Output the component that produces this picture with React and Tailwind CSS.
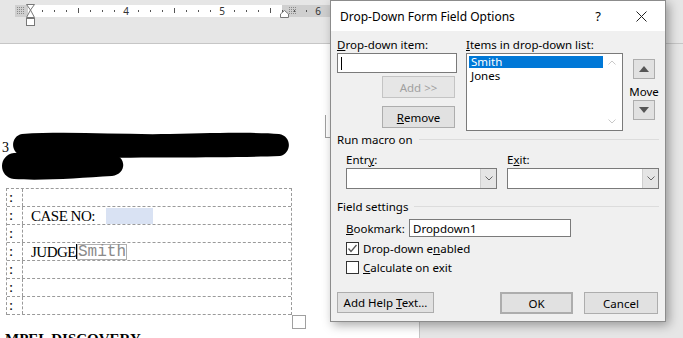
const ui = "font-['Noto_Sans',sans-serif] text-[11.5px] leading-[15px] text-black";

const Ruler = () => {
  const nums = [
    { x: 126, n: "4" },
    { x: 222, n: "5" },
    { x: 318, n: "6" },
  ];
  const marks = [];
  [30, 126, 222].forEach((base) => {
    for (let k = 1; k < 8; k++) {
      const x = base + k * 12;
      if (x < 36) continue;
      marks.push({ x, big: k === 4 });
    }
  });
  return (
    <svg width="340" height="30" className="block">
      <rect x="15" y="5" width="13" height="12" fill="#cfcfcf" />
      <rect x="28" y="5" width="254" height="12" fill="#ffffff" />
      <rect x="282" y="5" width="60" height="12" fill="#cfcfcf" />
      {[17, 289].map((gx) => (
        <g key={gx} fill="#8a8a8a">
          {[0, 2, 4, 6].map((i) =>
            [0, 2, 4, 6].map((j) => (
              <rect key={i + "-" + j} x={gx + i} y={7 + j} width="1" height="1" />
            ))
          )}
        </g>
      ))}
      {marks.map((m) =>
        m.big ? (
          <rect key={m.x} x={m.x} y="8" width="1" height="5" fill="#555" />
        ) : (
          <rect key={m.x} x={m.x} y="10" width="1" height="2" fill="#555" />
        )
      )}
      {nums.map((n) => (
        <text
          key={n.n}
          x={n.x}
          y="14.5"
          textAnchor="middle"
          fontSize="10"
          fontFamily="Noto Sans, sans-serif"
          fill="#333"
        >
          {n.n}
        </text>
      ))}
      <path d="M26.5 4.5 H34.5 L30.5 10 Z" fill="#fff" stroke="#777" />
      <path d="M30.5 10 L34.5 17.5 H26.5 Z" fill="#fff" stroke="#777" />
      <rect x="26.5" y="18.5" width="8" height="7" fill="#fff" stroke="#777" />
      <path d="M280.5 17.5 V14 L284.5 10.5 L288.5 14 V17.5 Z" fill="#fff" stroke="#777" />
    </svg>
  );
};

const Btn = ({ className = "", children }) => (
  <div
    className={
      "flex items-center justify-center bg-[#e1e1e1] border border-[#adadad] " + className
    }
  >
    {children}
  </div>
);

const Combo = ({ w }) => (
  <div className={"flex h-[21px] bg-white border border-[#7a7a7a] " + w}>
    <div className="flex-1" />
    <div className="w-[16px] bg-[#e5e5e5] border-l border-[#cfcfcf] flex items-center justify-center">
      <svg width="8" height="5">
        <path d="M0.5 0.5 L4 4 L7.5 0.5" fill="none" stroke="#666" />
      </svg>
    </div>
  </div>
);

const Check = ({ on }) => (
  <div className="w-[13px] h-[13px] bg-white border border-[#333] flex items-center justify-center">
    {on && (
      <svg width="11" height="11">
        <path d="M1.5 5.5 L4 8.5 L9.5 2" fill="none" stroke="#555" strokeWidth="1.3" />
      </svg>
    )}
  </div>
);

const Row = ({ children }) => (
  <div className="flex h-[18px] border-b border-dashed border-[#9a9a9a]">
    <div className="w-[16px] border-r border-dashed border-[#9a9a9a] pl-[2px] leading-[17px]">:</div>
    <div className="flex-1 flex items-center pl-[8px]">{children}</div>
  </div>
);

const Dialog = () => (
  <div
    className={
      "absolute left-[330px] top-0 w-[336px] h-[322px] bg-[#f0f0f0] border border-[#8c8c8c] shadow-[3px_3px_10px_rgba(0,0,0,0.35)] flex flex-col " +
      ui
    }
  >
    <div className="h-[30px] bg-white flex items-center pl-[9px] shrink-0">
      <span className="flex-1 text-[12px]">Drop-Down Form Field Options</span>
      <span className="text-[13px] mr-[35px]">?</span>
      <svg width="11" height="11" className="mr-[18px]">
        <path d="M0.5 0.5 L10.5 10.5 M10.5 0.5 L0.5 10.5" stroke="#222" strokeWidth="1" />
      </svg>
    </div>

    <div className="flex pl-[6px] h-[100px]">
      <div className="w-[120px] flex flex-col">
        <div className="mt-[6px] h-[15px]">
          <u>D</u>rop-down item:
        </div>
        <div className="mt-[1px] h-[20px] bg-white border border-[#7a7a7a] flex items-center pl-[3px]">
          <div className="w-px h-[13px] bg-black" />
        </div>
        <Btn className="ml-[45px] w-[73px] h-[22px] mt-[3px] text-[#a0a0a0] border-[#c4c4c4] bg-[#e6e6e6]">
          Add &gt;&gt;
        </Btn>
        <Btn className="ml-[45px] w-[73px] h-[22px] mt-[8px]">
          <span>
            <u>R</u>emove
          </span>
        </Btn>
      </div>
      <div className="ml-[9px] w-[157px] flex flex-col">
        <div className="mt-[6px] h-[15px]">
          <u>I</u>tems in drop-down list:
        </div>
        <div className="mt-[1px] h-[78px] bg-white border border-[#7a7a7a] flex p-[2px]">
          <div className="flex-1 flex flex-col">
            <div className="h-[12px] bg-[#0078d7] text-white pl-[2px] leading-[12px]">Smith</div>
            <div className="h-[13px] pl-[2px] leading-[13px] mt-[1px]">Jones</div>
          </div>
          <div className="w-[17px] flex flex-col items-center justify-between py-[4px]">
            <svg width="8" height="5">
              <path d="M0.5 4.5 L4 1 L7.5 4.5" fill="none" stroke="#c8c8c8" />
            </svg>
            <svg width="8" height="5">
              <path d="M0.5 0.5 L4 4 L7.5 0.5" fill="none" stroke="#c8c8c8" />
            </svg>
          </div>
        </div>
      </div>
      <div className="ml-[10px] w-[22px] flex flex-col items-center">
        <Btn className="mt-[28px] w-[22px] h-[20px] shrink-0">
          <svg width="10" height="6">
            <path d="M0 6 L5 0 L10 6 Z" fill="#555" />
          </svg>
        </Btn>
        <div className="mt-[5px] h-[15px] whitespace-nowrap">Move</div>
        <Btn className="mt-[1px] w-[22px] h-[20px] shrink-0">
          <svg width="10" height="6">
            <path d="M0 0 L10 0 L5 6 Z" fill="#555" />
          </svg>
        </Btn>
      </div>
    </div>

    <div className="mt-[1px] flex items-center pl-[6px] pr-[6px] h-[15px]">
      <span>Run macro on</span>
      <div className="flex-1 h-px bg-[#dcdcdc] ml-[6px]" />
    </div>
    <div className="mt-[5px] flex pl-[15px] h-[15px]">
      <div className="w-[161px]">
        Entr<u>y</u>:
      </div>
      <div>
        E<u>x</u>it:
      </div>
    </div>
    <div className="mt-[1px] flex pl-[15px] gap-[10px]">
      <Combo w="w-[151px]" />
      <Combo w="w-[152px]" />
    </div>

    <div className="mt-[10px] flex items-center pl-[6px] pr-[6px] h-[15px]">
      <span>Field settings</span>
      <div className="flex-1 h-px bg-[#dcdcdc] ml-[6px]" />
    </div>
    <div className="mt-[5px] flex items-center pl-[15px] h-[18px]">
      <div className="w-[63px]">
        <u>B</u>ookmark:
      </div>
      <div className="w-[162px] h-[18px] bg-white border border-[#7a7a7a] flex items-center pl-[3px]">
        Dropdown1
      </div>
    </div>
    <div className="mt-[5px] flex items-center pl-[15px] h-[13px] gap-[4px]">
      <Check on />
      <span>
        Drop-down e<u>n</u>abled
      </span>
    </div>
    <div className="mt-[6px] flex items-center pl-[15px] h-[13px] gap-[4px]">
      <Check />
      <span>
        <u>C</u>alculate on exit
      </span>
    </div>
    <div className="mt-[18px] flex pl-[6px]">
      <Btn className="w-[97px] h-[21px]">
        <span>
          Add Help <u>T</u>ext...
        </span>
      </Btn>
      <Btn className="ml-[66px] w-[73px] h-[22px] border-2 border-[#0078d7]">OK</Btn>
      <Btn className="ml-[11px] w-[74px] h-[22px]">Cancel</Btn>
    </div>
  </div>
);

export default function App() {
  return (
    <div className="relative w-[683px] h-[338px] overflow-hidden bg-[#e6e6e6] flex flex-col">
      <div className="h-[44px] shrink-0 bg-[#e6e6e6] border-b border-[#c6c6c6]">
        <Ruler />
      </div>
      <div className="w-[420px] flex-1 bg-white border-r border-[#c6c6c6] flex flex-col font-['Liberation_Serif',serif] text-[15px] leading-[18px] text-black">
        <div className="ml-[325px] mt-[71px] h-[23px] w-[6px] border-l border-b border-[#a0a0a0] shrink-0" />
        <div className="relative -mt-[8px] h-[50px] shrink-0">
          <span className="absolute left-[2px] top-[9px] text-[14px]">3</span>
          <svg width="300" height="50" className="absolute left-0 top-0">
            <path
              d="M22 4 C70 1 120 5 170 4 C220 3 260 2 279 4 C292 6 292 23 280 26 C230 28 150 27 90 28 C60 29 30 29 20 25 C10 21 11 6 22 4 Z"
              fill="#000"
            />
            <path
              d="M14 23 C40 21 80 22 112 24 C127 26 127 44 112 46 C80 48 40 51 14 49 C-2 47 -2 25 14 23 Z"
              fill="#000"
            />
          </svg>
        </div>
        <div className="mt-[8px] ml-[6px] w-[286px] border-t border-l border-r border-dashed border-[#9a9a9a] shrink-0">
          <Row />
          <Row>
            <span className="tracking-[-0.5px]">CASE NO:</span>
            <div className="ml-[11px] w-[47px] h-[16px] bg-[#d9e2f3]" />
          </Row>
          <Row />
          <Row>
            <span className="tracking-[-0.5px]">JUDGE</span>
            <div className="w-px h-[15px] bg-black" />
            <div className="h-[16px] border border-[#b0b0b0] flex items-center font-['Liberation_Mono',monospace] text-[16px] text-[#8a8a8a] leading-[14px]">
              Smith
            </div>
          </Row>
          <Row />
          <Row />
          <Row />
        </div>
        <div className="ml-[292px] w-[14px] h-[14px] border border-[#a0a0a0] shrink-0" />
        <div className="ml-[5px] mt-[2px] font-bold leading-[17px] whitespace-nowrap">MPEL DISCOVERY</div>
      </div>
      <Dialog />
    </div>
  );
}
